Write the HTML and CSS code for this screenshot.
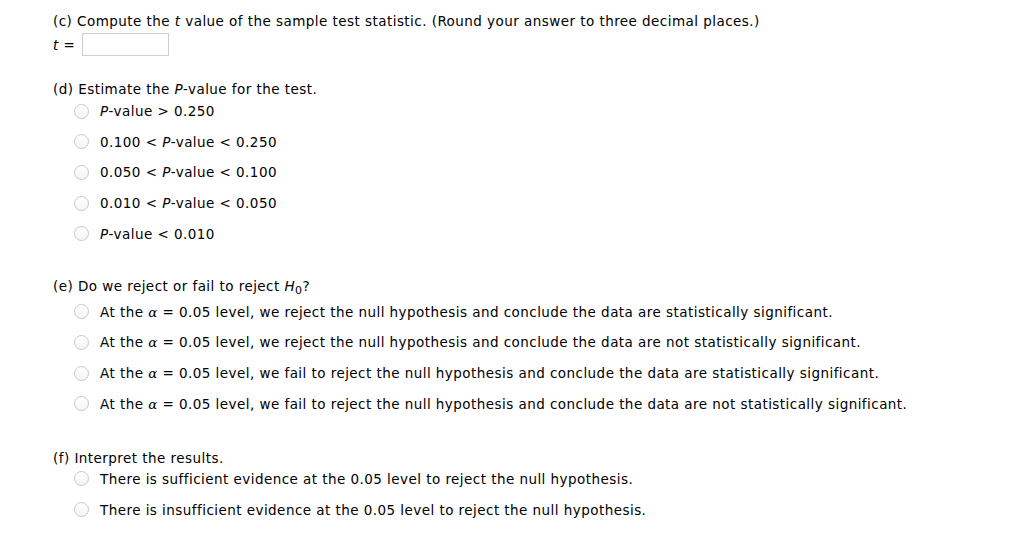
FILE: index.html
```html
<!DOCTYPE html>
<html>
<head>
<meta charset="utf-8">
<link rel="stylesheet" href="styles.css">
</head>
<body>
<div class="page">
  <section class="part part-c">
    <div class="q">(c) Compute the <i>t</i> value of the sample test statistic. (Round your answer to three decimal places.)</div>
    <div class="answer-row"><span class="var"><i>t</i> =</span><span class="input"></span></div>
  </section>

  <section class="part part-d">
    <div class="q">(d) Estimate the <i>P</i>-value for the test.</div>
    <div class="opts">
      <div class="opt"><span class="radio"></span><span><i>P</i>-value &gt; 0.250</span></div>
      <div class="opt"><span class="radio"></span><span>0.100 &lt; <i>P</i>-value &lt; 0.250</span></div>
      <div class="opt"><span class="radio"></span><span>0.050 &lt; <i>P</i>-value &lt; 0.100</span></div>
      <div class="opt"><span class="radio"></span><span>0.010 &lt; <i>P</i>-value &lt; 0.050</span></div>
      <div class="opt"><span class="radio"></span><span><i>P</i>-value &lt; 0.010</span></div>
    </div>
  </section>

  <section class="part part-e">
    <div class="q">(e) Do we reject or fail to reject <i>H</i><sub>0</sub>?</div>
    <div class="opts">
      <div class="opt"><span class="radio"></span><span>At the <i class="alpha">α</i> = 0.05 level, we reject the null hypothesis and conclude the data are statistically significant.</span></div>
      <div class="opt"><span class="radio"></span><span>At the <i class="alpha">α</i> = 0.05 level, we reject the null hypothesis and conclude the data are not statistically significant.</span></div>
      <div class="opt"><span class="radio"></span><span>At the <i class="alpha">α</i> = 0.05 level, we fail to reject the null hypothesis and conclude the data are statistically significant.</span></div>
      <div class="opt"><span class="radio"></span><span>At the <i class="alpha">α</i> = 0.05 level, we fail to reject the null hypothesis and conclude the data are not statistically significant.</span></div>
    </div>
  </section>

  <section class="part part-f">
    <div class="q">(f) Interpret the results.</div>
    <div class="opts">
      <div class="opt"><span class="radio"></span><span>There is sufficient evidence at the 0.05 level to reject the null hypothesis.</span></div>
      <div class="opt"><span class="radio"></span><span>There is insufficient evidence at the 0.05 level to reject the null hypothesis.</span></div>
    </div>
  </section>
</div>
</body>
</html>
```
FILE: styles.css
```css
html, body {
  margin: 0;
  padding: 0;
  background: #ffffff;
}
body {
  font-family: "DejaVu Sans", Verdana, sans-serif;
  font-size: 13.5px;
  letter-spacing: 0.45px;
  color: #000000;
}
.page {
  padding: 13px 0 0 53px;
}
.q {
  line-height: 16px;
  height: 16px;
  white-space: nowrap;
}
.q sub {
  font-size: 11px;
  line-height: 0;
  vertical-align: -3px;
}
.answer-row {
  margin-top: 4px;
  display: flex;
  align-items: center;
  height: 23px;
}
.var {
  width: 29px;
}
.input {
  width: 85px;
  height: 21px;
  border: 1px solid #cfcfcf;
  background: #fff;
}
.part-d { margin-top: 25px; }
.part-e { margin-top: 36px; }
.part-f { margin-top: 38px; }
.opts {
  padding-left: 21px;
  margin-top: 6px;
  display: flex;
  flex-direction: column;
  gap: 14.7px;
}
.part-e .opts { margin-top: 10px; }
.part-f .opts { margin-top: 5px; }
.opt {
  display: flex;
  align-items: center;
  height: 16px;
  line-height: 16px;
  white-space: nowrap;
}
.radio {
  width: 13px;
  height: 13px;
  border: 1px solid #c8c8c8;
  border-radius: 50%;
  margin-right: 11px;
  box-sizing: content-box;
  flex: none;
  background: linear-gradient(#ffffff, #f4f4f4);
}
.alpha {
  font-family: "DejaVu Serif", serif;
}
```
